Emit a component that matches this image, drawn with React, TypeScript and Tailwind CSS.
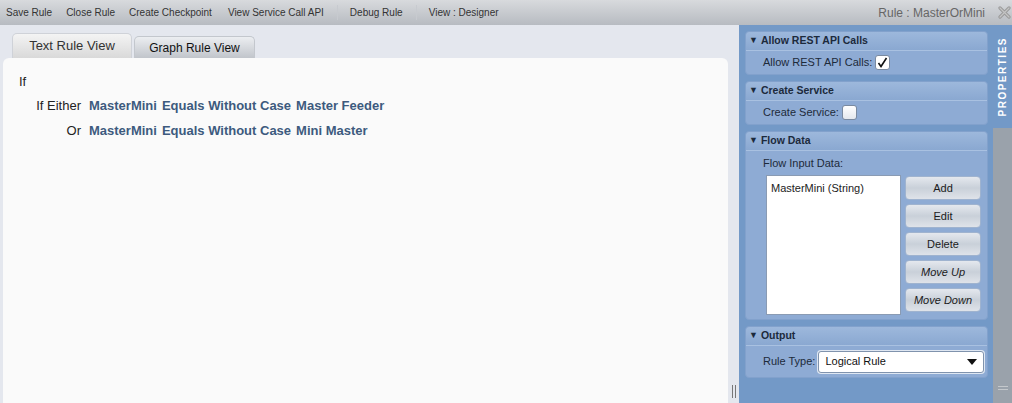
import React from "react";

const font = { fontFamily: '"Liberation Sans", Arial, sans-serif' };

function Section({ title, children }: { title: string; children: React.ReactNode }) {
  return (
    <div className="rounded-[4px] bg-[#8eabd4] border border-[#82a1cc]">
      <div className="h-[19px] flex items-center pl-[3px] text-[10.5px] font-bold text-[#1c2a3c] bg-gradient-to-b from-[#9db8dc] to-[#8aa8d1] border-b border-[#a9c1e1] rounded-t-[4px]">
        <span className="text-[9px] mr-[3px]">▼</span>
        {title}
      </div>
      {children}
    </div>
  );
}

function Btn({ label, italic }: { label: string; italic?: boolean }) {
  return (
    <div
      className={`h-[24px] w-[76px] rounded-[4px] flex items-center justify-center text-[11px] text-[#1b1b1b] bg-gradient-to-b from-[#e4e8ee] via-[#c9d0d9] to-[#dfe3e9] border border-[#9fb3cf] ${italic ? "italic" : ""}`}
    >
      {label}
    </div>
  );
}

function RuleLine({ label, value }: { label: string; value: string }) {
  return (
    <div className="h-[25px] flex gap-[5px] ml-[16px]">
      <span className="w-[46px] text-right mr-[3px]">{label}</span>
      <span className="font-bold text-[#3d5a7e]">MasterMini</span>
      <span className="font-bold text-[#3d5a7e]">Equals Without Case</span>
      <span className="font-bold text-[#3d5a7e]">{value}</span>
    </div>
  );
}

export default function App() {
  return (
    <div className="w-[1012px] h-[403px] overflow-hidden flex flex-col text-[#333]" style={font}>
      {/* toolbar */}
      <div className="h-[25px] flex items-center bg-gradient-to-b from-[#d8dadd] to-[#b7bbc1] text-[#333]">
        <div className="flex items-center pl-[6px] text-[10px]">
          <span className="mr-[14px]">Save Rule</span>
          <span className="mr-[14px]">Close Rule</span>
          <span className="mr-[16px]">Create Checkpoint</span>
          <span className="mr-[13px]">View Service Call API</span>
          <span className="w-px h-[15px] bg-[#c7cacf] mr-[12px]" />
          <span className="mr-[13px]">Debug Rule</span>
          <span className="w-px h-[15px] bg-[#c7cacf] mr-[12px]" />
          <span>View : Designer</span>
        </div>
        <div className="ml-auto flex items-center text-[12px] text-[#666]">
          <span className="mr-[13px]">Rule : MasterOrMini</span>
          <svg width="13" height="13" viewBox="0 0 13 13" className="mr-[1px]">
            <path d="M2 2 L11 11 M11 2 L2 11" stroke="#9a9a9a" strokeWidth="3.2" strokeLinecap="round" />
            <path d="M2 2 L11 11 M11 2 L2 11" stroke="#c4c4c4" strokeWidth="1.2" strokeLinecap="round" />
          </svg>
        </div>
      </div>

      <div className="flex h-[378px]">
        {/* left editor */}
        <div className="w-[728px] bg-[#e4e7ee] pl-[3px] pt-[8px] flex flex-col">
          <div className="flex items-end h-[25px] pl-[9px]">
            <div className="w-[120px] h-[25px] rounded-t-[5px] bg-gradient-to-b from-[#f4f4f4] to-[#d9d9d9] border border-b-0 border-[#cfd2d8] flex items-center justify-center text-[13px] text-[#333]">
              Text Rule View
            </div>
            <div className="ml-[2px] w-[121px] h-[22px] rounded-t-[5px] bg-gradient-to-b from-[#eceef1] to-[#c1c5cb] border border-b-0 border-[#c3c7cd] flex items-center justify-center text-[12px] text-[#111]">
              Graph Rule View
            </div>
          </div>
          <div className="flex-1 bg-[#fafafa] rounded-t-[6px] pl-[16px] pt-[14px] text-[13px] text-[#222]">
            <div className="h-[24px]">If</div>
            <RuleLine label="If Either" value="Master Feeder" />
            <RuleLine label="Or" value="Mini Master" />
          </div>
        </div>

        {/* splitter */}
        <div className="w-[11px] bg-[#e4e7ee] flex flex-col justify-end items-center pb-[5px]">
          <div className="flex gap-[2px]">
            <span className="w-px h-[13px] bg-[#777]" />
            <span className="w-px h-[13px] bg-[#777]" />
          </div>
        </div>

        {/* properties */}
        <div className="w-[254px] bg-[#7399c7] pl-[6px] pr-[5px] pt-[6px] flex flex-col gap-[6px] text-[11px]">
          <Section title="Allow REST API Calls">
            <div className="h-[23px] flex items-center pl-[17px] text-[#1d2a3a]">
              Allow REST API Calls:
              <span className="ml-[3px] w-[15px] h-[15px] rounded-[3px] bg-white border border-[#7a8aa0] flex items-center justify-center">
                <svg width="11" height="11" viewBox="0 0 11 11">
                  <path d="M1.5 6 L4 9.5 L9.5 1" stroke="#111" strokeWidth="1.6" fill="none" />
                </svg>
              </span>
            </div>
          </Section>
          <Section title="Create Service">
            <div className="h-[23px] flex items-center pl-[17px] text-[#1d2a3a]">
              Create Service:
              <span className="ml-[3px] w-[15px] h-[15px] rounded-[3px] bg-gradient-to-b from-white to-[#e4e8ee] border border-[#7a8aa0]" />
            </div>
          </Section>
          <Section title="Flow Data">
            <div className="pl-[17px] pt-[4px] pb-[4px] text-[#1d2a3a]">
              <div className="h-[16px]">Flow Input Data:</div>
              <div className="flex mt-[4px] pl-[3px]">
                <div className="w-[135px] h-[140px] bg-white border border-[#8a9bb3] pl-[4px] pt-[4px] text-[#222]">
                  MasterMini (String)
                </div>
                <div className="ml-[4px] flex flex-col gap-[4px] pt-[1px]">
                  <Btn label="Add" />
                  <Btn label="Edit" />
                  <Btn label="Delete" />
                  <Btn label="Move Up" italic />
                  <Btn label="Move Down" italic />
                </div>
              </div>
            </div>
          </Section>
          <Section title="Output">
            <div className="h-[31px] flex items-center pl-[17px] text-[#1d2a3a]">
              Rule Type:
              <div className="ml-[3px] w-[166px] h-[22px] bg-white rounded-[3px] border border-[#8093ad] shadow-[0_0_0_1px_#dfe7f2] flex items-center pl-[6px] text-[#111]">
                Logical Rule
                <svg width="10" height="6" viewBox="0 0 10 6" className="ml-auto mr-[6px]">
                  <path d="M0 0 H10 L5 6 Z" fill="#111" />
                </svg>
              </div>
            </div>
          </Section>
        </div>

        {/* side strip */}
        <div className="w-[19px] flex flex-col bg-[#9aa2ab]">
          <div className="h-[103px] bg-[#7399c7] flex items-center justify-center">
            <span
              className="text-white font-bold text-[10px] tracking-[1.5px]"
              style={{ writingMode: "vertical-rl", transform: "rotate(180deg)" }}
            >
              PROPERTIES
            </span>
          </div>
          <div className="flex-1 flex flex-col justify-end items-center pb-[13px] gap-[2px]">
            <span className="w-[10px] h-px bg-[#c4c8cc]" />
            <span className="w-[10px] h-px bg-[#c4c8cc]" />
          </div>
        </div>
      </div>
    </div>
  );
}
